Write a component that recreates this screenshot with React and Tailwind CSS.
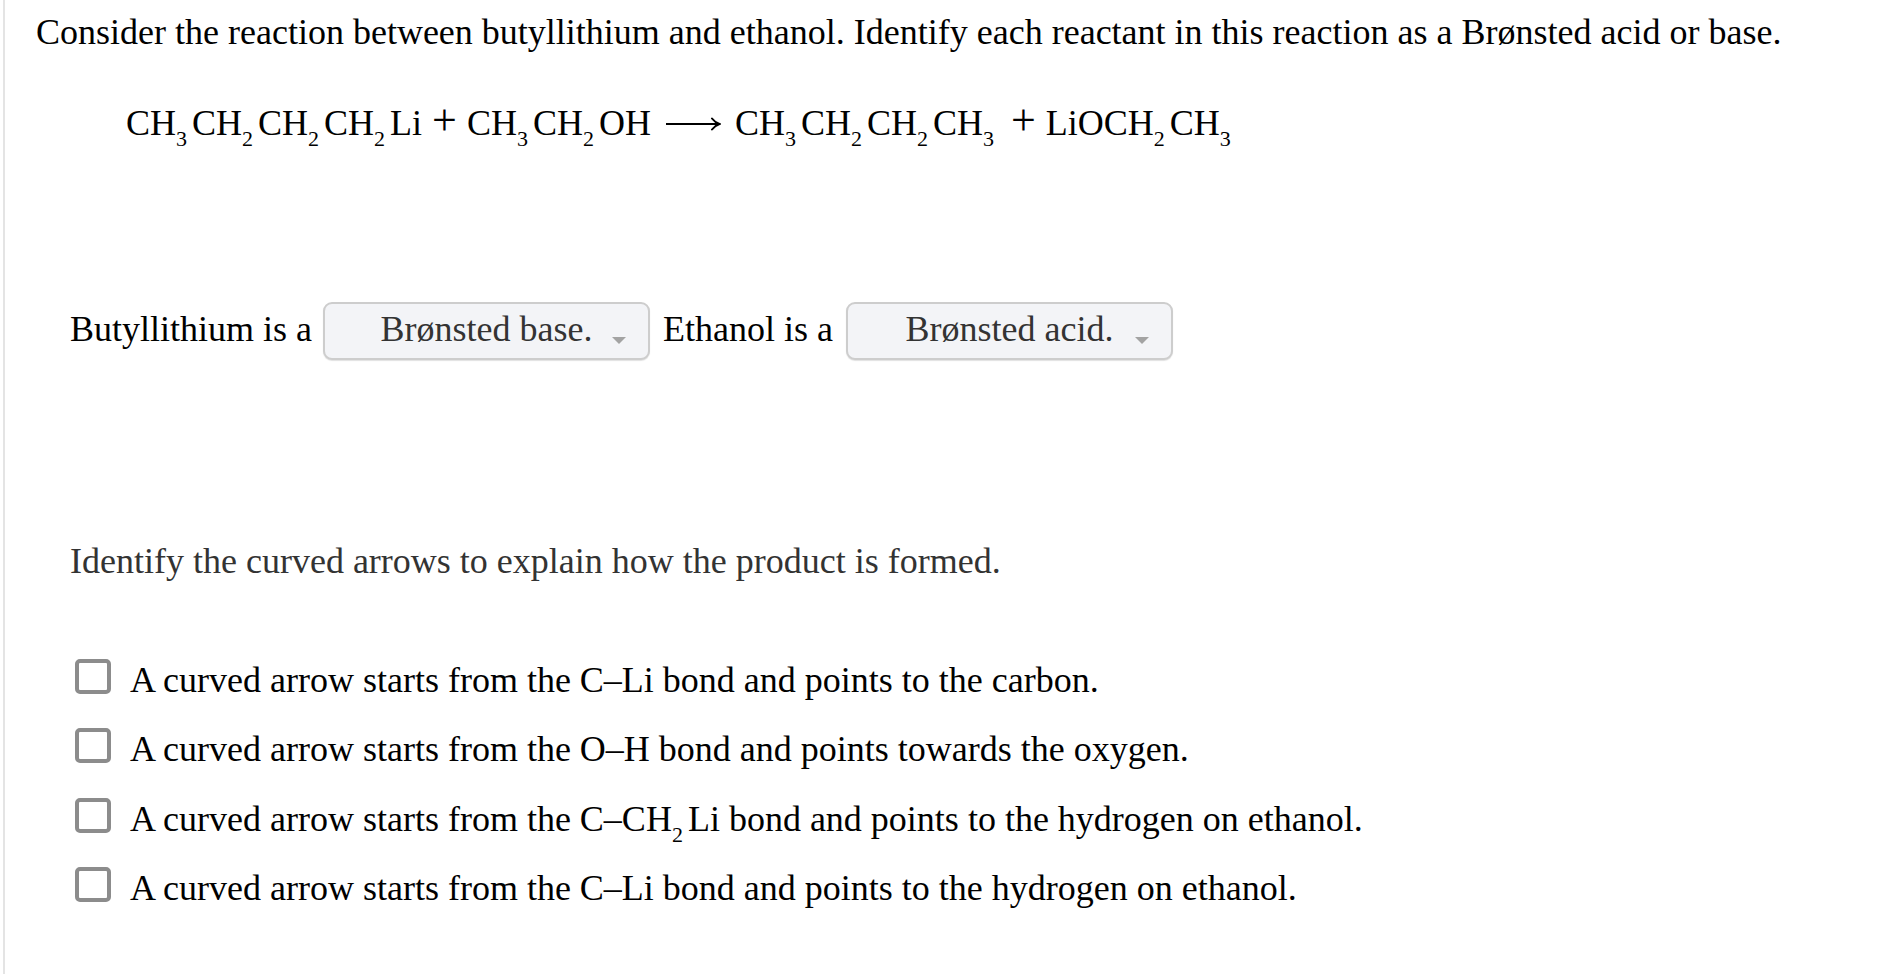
import React from "react";

// subscript used in the formulas
function Sub({ children }) {
  return (
    <span className="relative top-[11px] mr-[5px] text-[22px] leading-none">
      {children}
    </span>
  );
}

function Plus({ className }) {
  return <span className={"text-[44px] leading-[0] " + className}>+</span>;
}

function LongArrow() {
  return (
    <svg
      className="inline-block align-baseline ml-[14px] mr-[14px]"
      width="56"
      height="18"
      viewBox="0 0 56 18"
    >
      <line x1="1" y1="7" x2="53" y2="7" stroke="#000" strokeWidth="2" />
      <path
        d="M47 1.5 Q50 5.5 54.5 7 Q50 8.5 47 12.5"
        fill="none"
        stroke="#000"
        strokeWidth="2"
        strokeLinecap="round"
      />
    </svg>
  );
}

function Dropdown({ value }) {
  return (
    <div className="relative h-[58px] w-[327px] rounded-[9px] border-2 border-[#cdcdcd] bg-[#f3f4f7] pt-[5px] text-center text-[#333] shadow-[0_1px_1px_rgba(0,0,0,0.12)]">
      {value}
      <span className="absolute right-[22px] top-[33px] h-0 w-0 border-x-[7px] border-t-[7px] border-x-transparent border-t-[#a3a3a3]" />
    </div>
  );
}

function Option({ children }) {
  return (
    <div className="flex h-[40px] items-start">
      <span className="ml-[5px] mt-[-1px] h-[35px] w-[36px] shrink-0 rounded-[5px] border-4 border-[#8c8c8c] bg-white" />
      <span className="ml-[19px] whitespace-nowrap">{children}</span>
    </div>
  );
}

export default function App() {
  return (
    <div className="min-h-[974px] bg-white pl-[3px]">
      <div className="min-h-[974px] border-l-2 border-[#e4e4e4] pl-[31px] pt-[12px] font-['Liberation_Serif',serif] text-[36px] leading-[40px] text-black">
        <p className="whitespace-nowrap">
          Consider the reaction between butyllithium and ethanol. Identify each reactant in this reaction as a Brønsted acid or base.
        </p>

        <div className="ml-[90px] mt-[51px] h-[40px] whitespace-nowrap">
          CH<Sub>3</Sub>CH<Sub>2</Sub>CH<Sub>2</Sub>CH<Sub>2</Sub>Li
          <Plus className="ml-[10px] mr-[10px]" />
          CH<Sub>3</Sub>CH<Sub>2</Sub>OH
          <LongArrow />
          CH<Sub>3</Sub>CH<Sub>2</Sub>CH<Sub>2</Sub>CH<Sub>3</Sub>
          <Plus className="ml-[12px] mr-[10px]" />
          LiOCH<Sub>2</Sub>CH<Sub>3</Sub>
        </div>

        <div className="ml-[34px] mt-[159px] flex items-baseline whitespace-nowrap">
          <span>Butyllithium is a</span>
          <div className="ml-[11px] mr-[13px]">
            <Dropdown value="Brønsted base." />
          </div>
          <span>Ethanol is a</span>
          <div className="ml-[13px]">
            <Dropdown value="Brønsted acid." />
          </div>
        </div>

        <p className="ml-[34px] mt-[181px] text-[#333]">
          Identify the curved arrows to explain how the product is formed.
        </p>

        <div className="ml-[34px] mt-[79px] flex flex-col gap-[29.3px]">
          <Option>A curved arrow starts from the C–Li bond and points to the carbon.</Option>
          <Option>A curved arrow starts from the O–H bond and points towards the oxygen.</Option>
          <Option>
            A curved arrow starts from the C–CH<Sub>2</Sub>Li bond and points to the hydrogen on ethanol.
          </Option>
          <Option>A curved arrow starts from the C–Li bond and points to the hydrogen on ethanol.</Option>
        </div>
      </div>
    </div>
  );
}
